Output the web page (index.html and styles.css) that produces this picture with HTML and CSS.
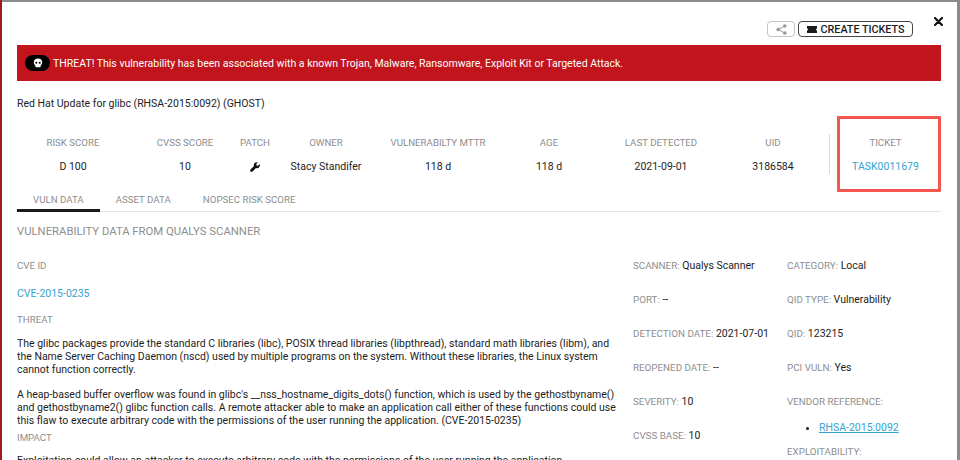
FILE: index.html
```html
<!DOCTYPE html>
<html lang="en">
<head>
<meta charset="utf-8">
<title>Vulnerability details</title>
<link rel="stylesheet" href="styles.css">
</head>
<body>
<div class="modal">
  <div class="actions">
    <button class="btn btn-share" aria-label="Share">
      <svg width="11" height="11" viewBox="0 0 12 12"><circle cx="9.6" cy="2.2" r="2" fill="#9a9a9a"/><circle cx="2.4" cy="6" r="2" fill="#9a9a9a"/><circle cx="9.6" cy="9.8" r="2" fill="#9a9a9a"/><path d="M9.6 2.2 2.4 6l7.2 3.8" fill="none" stroke="#9a9a9a" stroke-width="1"/></svg>
    </button>
    <button class="btn btn-create">
      <svg width="10" height="7" viewBox="0 0 10 7"><path d="M0 0h10v2.500a1 1 0 0 0 0 2V7H0V4.500a1 1 0 0 0 0-2z" fill="#1c1c1c"/></svg>
      CREATE TICKETS
    </button>
    <svg class="close" width="9" height="9" viewBox="0 0 9 9"><path d="M1 1l7 7M8 1 1 8" stroke="#111" stroke-width="2.2" stroke-linecap="round"/></svg>
  </div>

  <div class="banner">
    <span class="skull-pill">
      <svg width="10" height="10" viewBox="0 0 10 10"><path d="M5 .5C2.4.5.8 2.2.8 4.4c0 1.3.6 2.2 1.5 2.8v1.3c0 .5.3.8.8.8h3.8c.5 0 .8-.3.8-.8V7.200c.9-.6 1.500-1.500 1.500-2.800C9.200 2.200 7.600.5 5 .5z" fill="#fff"/><circle cx="3.300" cy="4.700" r="1.050" fill="#000"/><circle cx="6.700" cy="4.700" r="1.050" fill="#000"/></svg>
    </span>
    <span>THREAT! This vulnerability has been associated with a known Trojan, Malware, Ransomware, Exploit Kit or Targeted Attack.</span>
  </div>

  <h1 class="title">Red Hat Update for glibc (RHSA-2015:0092) (GHOST)</h1>

  <div class="stats">
    <div class="stat"><div class="stat-label">RISK SCORE</div><div class="stat-value">D 100</div></div>
    <div class="stat"><div class="stat-label">CVSS SCORE</div><div class="stat-value">10</div></div>
    <div class="stat"><div class="stat-label">PATCH</div><div class="stat-value">
      <svg class="wrench" width="10" height="10" viewBox="0 0 12 12"><path d="M11.600 2.500 9.600 4.400 7.800 4.100 7.500 2.300 9.500.4C8 -.1 6.400.2 5.500 1.200 4.500 2.200 4.300 3.600 4.800 4.800L.6 9c-.6.600-.6 1.500 0 2.100l.3.300c.6.600 1.500.6 2.100 0L7.200 7.200c1.200.5 2.600.3 3.600-.7 1-.9 1.300-2.500.8-4z" fill="#111"/></svg>
    </div></div>
    <div class="stat"><div class="stat-label">OWNER</div><div class="stat-value">Stacy Standifer</div></div>
    <div class="stat"><div class="stat-label">VULNERABILTY MTTR</div><div class="stat-value">118 d</div></div>
    <div class="stat"><div class="stat-label">AGE</div><div class="stat-value">118 d</div></div>
    <div class="stat"><div class="stat-label">LAST DETECTED</div><div class="stat-value">2021-09-01</div></div>
    <div class="stat"><div class="stat-label">UID</div><div class="stat-value">3186584</div></div>
    <div class="stat stat-ticket"><div class="stat-label">TICKET</div><div class="stat-value"><a class="link-plain" href="#">TASK0011679</a></div></div>
    <div class="highlight"></div>
  </div>

  <div class="tabs">
    <div class="tab tab-active">VULN DATA</div>
    <div class="tab">ASSET DATA</div>
    <div class="tab">NOPSEC RISK SCORE</div>
  </div>

  <h2 class="section-title">VULNERABILITY DATA FROM QUALYS SCANNER</h2>

  <div class="content">
    <div class="main">
      <div class="label label-cve">CVE ID</div>
      <a class="link-plain cve" href="#">CVE-2015-0235</a>
      <div class="label label-threat">THREAT</div>
      <p class="first">The glibc packages provide the standard C libraries (libc), POSIX thread libraries (libpthread), standard math libraries (libm), and the Name Server Caching Daemon (nscd) used by multiple programs on the system. Without these libraries, the Linux system cannot function correctly.</p>
      <p>A heap-based buffer overflow was found in glibc's __nss_hostname_digits_dots() function, which is used by the gethostbyname() and gethostbyname2() glibc function calls. A remote attacker able to make an application call either of these functions could use this flaw to execute arbitrary code with the permissions of the user running the application. (CVE-2015-0235)</p>
      <div class="label label-impact">IMPACT</div>
      <p class="impact">Exploitation could allow an attacker to execute arbitrary code with the permissions of the user running the application.</p>
    </div>
    <div class="side">
      <div class="side-col side-col-a">
        <div class="field"><span class="key">SCANNER:</span> Qualys Scanner</div>
        <div class="field"><span class="key">PORT:</span> --</div>
        <div class="field"><span class="key">DETECTION DATE:</span> 2021-07-01</div>
        <div class="field"><span class="key">REOPENED DATE:</span> --</div>
        <div class="field"><span class="key">SEVERITY:</span> 10</div>
        <div class="field"><span class="key">CVSS BASE:</span> 10</div>
      </div>
      <div class="side-col">
        <div class="field"><span class="key">CATEGORY:</span> Local</div>
        <div class="field"><span class="key">QID TYPE:</span> Vulnerability</div>
        <div class="field"><span class="key">QID:</span> 123215</div>
        <div class="field"><span class="key">PCI VULN:</span> Yes</div>
        <div class="field field-vendor"><span class="key">VENDOR REFERENCE:</span></div>
        <ul class="refs"><li><a href="#">RHSA-2015:0092</a></li></ul>
        <div class="field"><span class="key">EXPLOITABILITY:</span></div>
      </div>
    </div>
  </div>
</div>
</body>
</html>
```
FILE: styles.css
```css
* { box-sizing: border-box; }
html, body { height: 100%; }
body {
  margin: 0;
  height: 460px;
  overflow: hidden;
  background: #8b8b8b;
  padding: 2px 3px 0 0;
  font-family: Roboto, "Liberation Sans", sans-serif;
  font-size: 10.5px;
  color: #1d1d1d;
  border-left: 2px solid #a01820;
}
.modal {
  height: 458px;
  overflow: hidden;
  background: #fff;
  padding: 19px 16px 0 15px;
}
.actions {
  display: flex;
  justify-content: flex-end;
  align-items: center;
  height: 16px;
  position: relative;
  padding-right: 28px;
  gap: 3px;
}
.btn {
  display: flex;
  align-items: center;
  justify-content: center;
  height: 16px;
  padding: 0;
  background: #fff;
  border-radius: 4px;
  font-family: inherit;
}
.btn-share { width: 28px; border: 1px solid #c4c4c4; }
.btn-create {
  width: 115px;
  gap: 4px;
  border: 1px solid #444;
  font-size: 10.75px;
  font-weight: 500;
  color: #1c1c1c;
}
.close { position: absolute; right: -2px; top: -4px; }
.banner {
  display: flex;
  align-items: center;
  gap: 3px;
  height: 36px;
  margin-top: 8px;
  padding-left: 8px;
  background: #c2141c;
  color: #fff;
  font-size: 10.5px;
}
.skull-pill {
  display: flex;
  align-items: center;
  justify-content: center;
  width: 25px;
  height: 16px;
  background: #000;
  border-radius: 8px;
}
.title {
  margin: 16px 0 0;
  font-size: 10.5px;
  font-weight: 400;
  line-height: 13px;
  color: #222;
}
.stats {
  display: grid;
  grid-template-columns: 112px 112px 28px 114px 110px 112px 112px 112px 112px;
  position: relative;
  margin-top: 26px;
  text-align: center;
}
.stat { white-space: nowrap; display: flex; flex-direction: column; align-items: center; }
.stat-label { color: #8e8e8e; font-size: 9.7px; line-height: 13px; }
.stat-value { margin-top: 11px; line-height: 13px; height: 13px; color: #1d1d1d; }
.stat-ticket { border-left: 1px solid #dcdcdc; height: 40px; margin-top: -2px; padding-top: 2px; }
.wrench { display: block; margin-top: 2px; }
.highlight {
  position: absolute;
  left: 820px;
  top: -20px;
  width: 104px;
  height: 76px;
  border: 3px solid #f2564d;
  border-radius: 1px;
}
a { color: #36a3cf; }
.link-plain { text-decoration: none; }
.tabs {
  display: flex;
  margin-top: 15px;
  height: 23px;
  border-bottom: 1px solid #e4e4e4;
}
.tab {
  padding: 0 16px;
  height: 23px;
  line-height: 22px;
  color: #8e8e8e;
  font-size: 9.7px;
}
.tab-active { border-bottom: 3px solid #1a1a1a; }
.section-title {
  margin: 13px 0 0;
  font-size: 11.3px;
  font-weight: 400;
  line-height: 14px;
  color: #8e8e8e;
}
.content { display: flex; }
.main { width: 600px; flex: none; }
.label { color: #8e8e8e; font-size: 9.7px; line-height: 13px; }
.label-cve { margin-top: 20px; }
.cve { display: block; margin-top: 15px; line-height: 13px; }
.label-threat { margin-top: 13px; }
.label-impact { margin-top: 4px; }
p { margin: 12px 0 0; line-height: 13px; color: #1d1d1d; }
.first { margin-top: 11px; }
.impact { margin-top: 10px; }
.side { display: flex; margin-left: 16px; }
.side-col { display: flex; flex-direction: column; }
.side-col-a { width: 154px; flex: none; }
.field { margin-top: 21px; line-height: 13px; color: #1d1d1d; white-space: nowrap; }
.side-col > .field:first-child { margin-top: 20px; }
.key { color: #8e8e8e; font-size: 9.8px; }
.refs { margin: 13px 0 -10px; padding-left: 32px; line-height: 13px; }
```
